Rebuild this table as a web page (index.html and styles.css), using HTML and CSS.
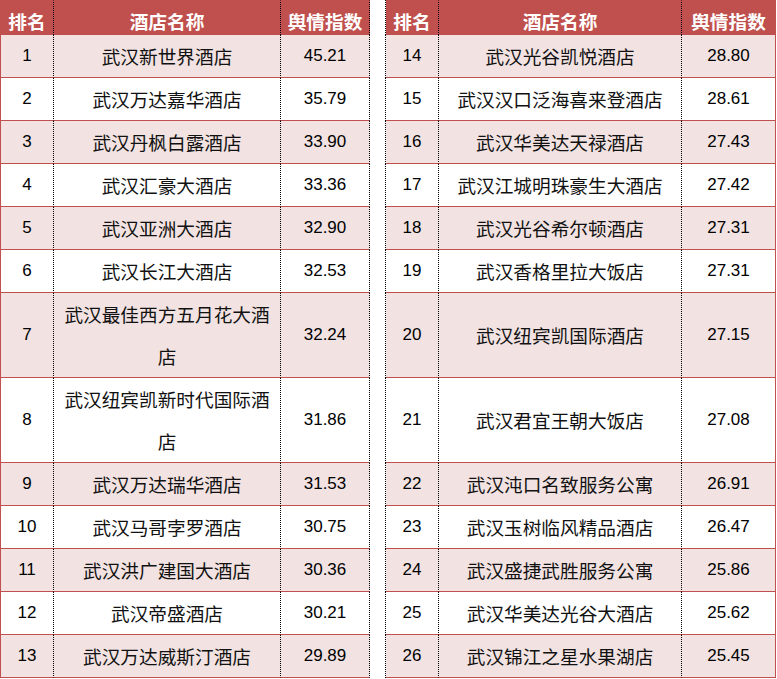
FILE: index.html
```html
<!DOCTYPE html>
<html lang="zh-CN">
<head>
<meta charset="utf-8">
<title>武汉酒店舆情指数排名</title>
<link rel="stylesheet" href="styles.css">
</head>
<body>
<div class="board">
  <div class="row head">
    <div class="c first">排名</div><div class="c">酒店名称</div><div class="c">舆情指数</div>
    <div class="c gap"></div>
    <div class="c">排名</div><div class="c">酒店名称</div><div class="c last">舆情指数</div>
  </div>
  <div class="row alt">
    <div class="c num first">1</div><div class="c name">武汉新世界酒店</div><div class="c num">45.21</div>
    <div class="c gap"></div>
    <div class="c num">14</div><div class="c name">武汉光谷凯悦酒店</div><div class="c num last">28.80</div>
  </div>
  <div class="row">
    <div class="c num first">2</div><div class="c name">武汉万达嘉华酒店</div><div class="c num">35.79</div>
    <div class="c gap"></div>
    <div class="c num">15</div><div class="c name">武汉汉口泛海喜来登酒店</div><div class="c num last">28.61</div>
  </div>
  <div class="row alt">
    <div class="c num first">3</div><div class="c name">武汉丹枫白露酒店</div><div class="c num">33.90</div>
    <div class="c gap"></div>
    <div class="c num">16</div><div class="c name">武汉华美达天禄酒店</div><div class="c num last">27.43</div>
  </div>
  <div class="row">
    <div class="c num first">4</div><div class="c name">武汉汇豪大酒店</div><div class="c num">33.36</div>
    <div class="c gap"></div>
    <div class="c num">17</div><div class="c name">武汉江城明珠豪生大酒店</div><div class="c num last">27.42</div>
  </div>
  <div class="row alt">
    <div class="c num first">5</div><div class="c name">武汉亚洲大酒店</div><div class="c num">32.90</div>
    <div class="c gap"></div>
    <div class="c num">18</div><div class="c name">武汉光谷希尔顿酒店</div><div class="c num last">27.31</div>
  </div>
  <div class="row">
    <div class="c num first">6</div><div class="c name">武汉长江大酒店</div><div class="c num">32.53</div>
    <div class="c gap"></div>
    <div class="c num">19</div><div class="c name">武汉香格里拉大饭店</div><div class="c num last">27.31</div>
  </div>
  <div class="row alt">
    <div class="c num first">7</div><div class="c name">武汉最佳西方五月花大酒店</div><div class="c num">32.24</div>
    <div class="c gap"></div>
    <div class="c num">20</div><div class="c name">武汉纽宾凯国际酒店</div><div class="c num last">27.15</div>
  </div>
  <div class="row">
    <div class="c num first">8</div><div class="c name">武汉纽宾凯新时代国际酒店</div><div class="c num">31.86</div>
    <div class="c gap"></div>
    <div class="c num">21</div><div class="c name">武汉君宜王朝大饭店</div><div class="c num last">27.08</div>
  </div>
  <div class="row alt">
    <div class="c num first">9</div><div class="c name">武汉万达瑞华酒店</div><div class="c num">31.53</div>
    <div class="c gap"></div>
    <div class="c num">22</div><div class="c name">武汉沌口名致服务公寓</div><div class="c num last">26.91</div>
  </div>
  <div class="row">
    <div class="c num first">10</div><div class="c name">武汉马哥孛罗酒店</div><div class="c num">30.75</div>
    <div class="c gap"></div>
    <div class="c num">23</div><div class="c name">武汉玉树临风精品酒店</div><div class="c num last">26.47</div>
  </div>
  <div class="row alt">
    <div class="c num first">11</div><div class="c name">武汉洪广建国大酒店</div><div class="c num">30.36</div>
    <div class="c gap"></div>
    <div class="c num">24</div><div class="c name">武汉盛捷武胜服务公寓</div><div class="c num last">25.86</div>
  </div>
  <div class="row">
    <div class="c num first">12</div><div class="c name">武汉帝盛酒店</div><div class="c num">30.21</div>
    <div class="c gap"></div>
    <div class="c num">25</div><div class="c name">武汉华美达光谷大酒店</div><div class="c num last">25.62</div>
  </div>
  <div class="row alt">
    <div class="c num first">13</div><div class="c name">武汉万达威斯汀酒店</div><div class="c num">29.89</div>
    <div class="c gap"></div>
    <div class="c num">26</div><div class="c name">武汉锦江之星水果湖店</div><div class="c num last">25.45</div>
  </div>
</div>
</body>
</html>
```

FILE: styles.css
```css
html, body {
  margin: 0;
  padding: 0;
  background: #ffffff;
}

.board {
  width: 776px;
  display: flex;
  flex-direction: column;
}

.row {
  display: grid;
  grid-template-columns: 54px 227px 89px 16px 53px 243px 94px;
}

.c {
  box-sizing: border-box;
  display: flex;
  align-items: center;
  justify-content: center;
  text-align: center;
  border-bottom: 1px solid #c0504d;
  border-right: 1px dotted #000000;
  line-height: 42px;
  color: #111111;
  background: #ffffff;
}

.c.first {
  border-left: 1px solid #c0504d;
}

.c.last {
  border-right: 1px solid #c0504d;
}

.c.gap {
  border-bottom: none;
  background: #ffffff;
}

.row.alt .c:not(.gap) {
  background: #f2e3e2;
}

.num {
  font-family: "Liberation Sans", Arial, sans-serif;
  font-size: 17px;
  color: #000000;
}

.name {
  font-family: "Noto Sans CJK SC", "Noto Sans", sans-serif;
  font-size: 18.67px;
  padding: 0 5px;
}

.head .c {
  font-family: "Noto Sans CJK SC", "Noto Sans", sans-serif;
  font-size: 18.67px;
  font-weight: 700;
  color: #ffffff;
  background: #c0504d;
  border-top: 1px solid #c0504d;
  border-bottom: none;
  padding-top: 6px;
  line-height: 28px;
  white-space: nowrap;
}

.head .c.gap {
  background: #ffffff;
  border-top: none;
}
```
